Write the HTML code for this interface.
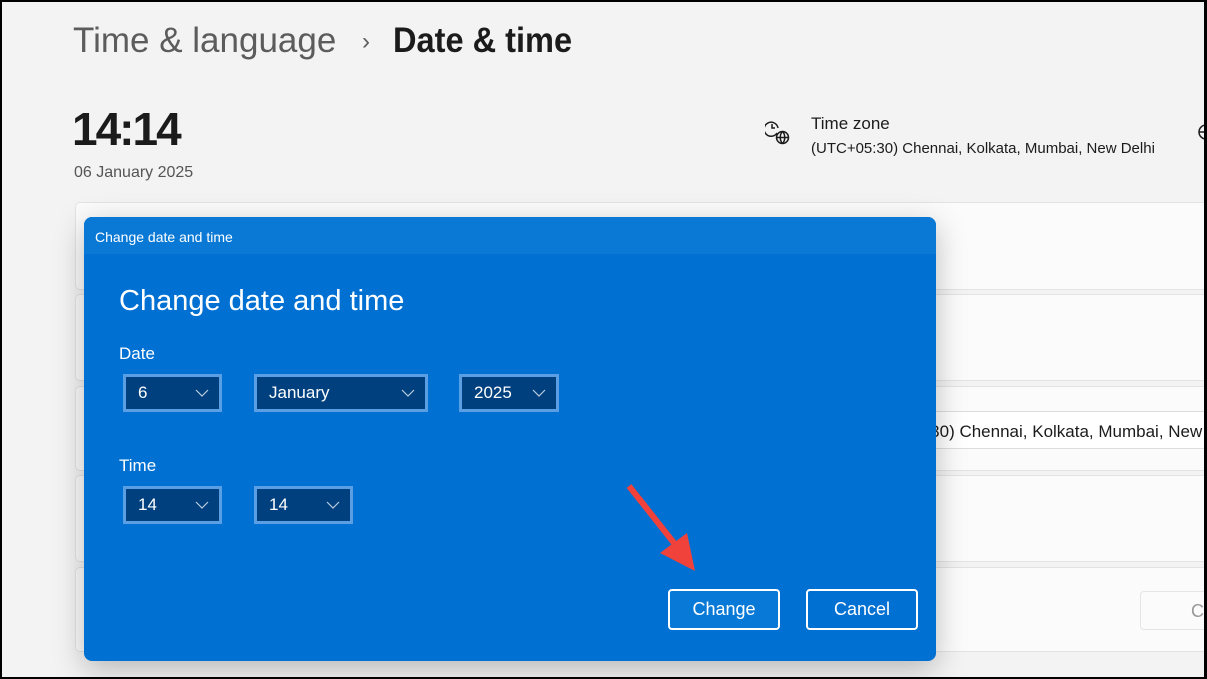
<!DOCTYPE html>
<html><head><meta charset="utf-8"><style>
*{margin:0;padding:0;box-sizing:border-box}
body{width:1207px;height:679px;overflow:hidden;background:#000;font-family:"Liberation Sans",sans-serif;position:relative}
.frame{position:absolute;left:2px;top:2px;width:1202px;height:675px;background:#f3f3f3;overflow:hidden}
.abs{position:absolute;white-space:nowrap}
.card{position:absolute;left:73px;width:1140px;background:#fbfbfb;border:1px solid #e3e3e3;border-radius:5px}
.dlg{position:absolute;left:82px;top:215px;width:852px;height:444px;background:#0070d2;border-radius:8px;overflow:hidden;box-shadow:0 8px 30px rgba(0,0,0,.25)}
.tb{height:37px;background:#0a79d6;color:#fff;font-size:14px;padding:12px 0 0 11px}
.dd{position:absolute;height:38px;background:#00407f;border:3px solid #5a9fe3;color:#fff;font-size:17px;padding:6px 0 0 12px}
.dd svg{position:absolute;right:10px;top:12px}
.btn{position:absolute;top:587px;width:112px;height:41px;border:2px solid #fff;border-radius:4px;color:#fff;font-size:18px;text-align:center;line-height:37px}
</style></head><body>
<div class="frame">
<div class="abs" style="left:71px;top:19px;font-size:35px;color:#5c5c5c">Time &amp; language</div>
<div class="abs" style="left:360px;top:26px;font-size:24px;color:#5c5c5c">›</div>
<div class="abs" style="left:391px;top:19px;font-size:35px;font-weight:bold;color:#1b1b1b;transform:scaleX(.93);transform-origin:left">Date &amp; time</div>
<div class="abs" style="left:70px;top:100px;font-size:46px;font-weight:bold;color:#1b1b1b;letter-spacing:-2px">14:14</div>
<div class="abs" style="left:72px;top:162px;font-size:16px;color:#555">06 January 2025</div>
<svg class="abs" style="left:763px;top:118px" width="28" height="28" viewBox="0 0 28 28" fill="none" stroke="#1b1b1b" stroke-width="1.5"><path d="M12 13A7 7 0 1 1 13 8"/><path d="M7 4v4h3"/><circle cx="17.5" cy="17.5" r="6"/><path d="M11.5 17.5h12M17.5 11.5c-3 3-3 9 0 12M17.5 11.5c3 3 3 9 0 12"/></svg>
<div class="abs" style="left:809px;top:112px;font-size:17px;color:#1b1b1b">Time zone</div>
<div class="abs" style="left:809px;top:138px;font-size:15px;color:#1b1b1b">(UTC+05:30) Chennai, Kolkata, Mumbai, New Delhi</div>
<svg class="abs" style="left:1194px;top:120px" width="14" height="20" fill="none" stroke="#1b1b1b" stroke-width="1.5"><circle cx="10" cy="10" r="7"/><path d="M3 10h10"/></svg>
<div class="card" style="top:200px;height:88px"></div>
<div class="card" style="top:292px;height:87px"></div>
<div class="card" style="top:384px;height:85px"></div>
<div class="abs" style="left:845px;top:409px;width:380px;height:38px;background:#fff;border:1px solid #ddd;border-radius:4px;font-size:17px;color:#1b1b1b;padding:10px 0 0 8px;white-space:nowrap">(UTC+05:30) Chennai, Kolkata, Mumbai, New Delhi</div>
<div class="card" style="top:473px;height:87px"></div>
<div class="card" style="top:565px;height:85px"></div>
<div class="abs" style="left:1138px;top:589px;width:80px;height:39px;border:1px solid #e5e5e5;border-radius:4px;background:#fbfbfb;font-size:18px;color:#999;padding:9px 0 0 50px">Ch</div>
<div class="dlg">
<div class="tb">Change date and time</div>
<div class="abs" style="left:35px;top:68px;font-size:29px;color:#fff">Change date and time</div>
<div class="abs" style="left:35px;top:127px;font-size:17px;color:#fff">Date</div>
<div class="abs" style="left:35px;top:239px;font-size:17px;color:#fff">Time</div>
<div class="dd" style="left:39px;top:157px;width:99px">6<svg width="14" height="8"><path d="M1 1l6 6 6-6" stroke="#bcd" fill="none" stroke-width="1.2"/></svg></div>
<div class="dd" style="left:170px;top:157px;width:174px">January<svg width="14" height="8"><path d="M1 1l6 6 6-6" stroke="#bcd" fill="none" stroke-width="1.2"/></svg></div>
<div class="dd" style="left:375px;top:157px;width:100px">2025<svg width="14" height="8"><path d="M1 1l6 6 6-6" stroke="#bcd" fill="none" stroke-width="1.2"/></svg></div>
<div class="dd" style="left:39px;top:269px;width:99px">14<svg width="14" height="8"><path d="M1 1l6 6 6-6" stroke="#bcd" fill="none" stroke-width="1.2"/></svg></div>
<div class="dd" style="left:170px;top:269px;width:99px">14<svg width="14" height="8"><path d="M1 1l6 6 6-6" stroke="#bcd" fill="none" stroke-width="1.2"/></svg></div>
</div>
<div class="btn" style="left:666px;background:#0879d6">Change</div>
<div class="btn" style="left:804px;background:#0070d2">Cancel</div>
<svg class="abs" style="left:0;top:0" width="1207" height="679"><path d="M627 484L672 541" stroke="#f0413a" stroke-width="6"/><path d="M693 569L658 551L685 531Z" fill="#f0413a"/></svg>
</div>
</body></html>
